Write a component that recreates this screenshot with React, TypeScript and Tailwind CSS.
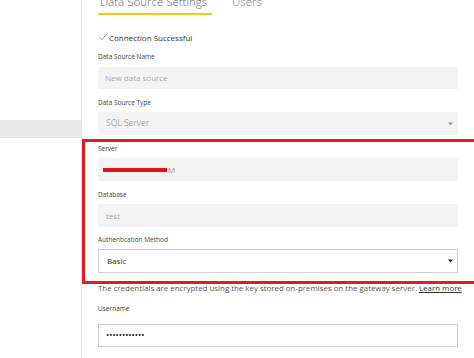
import React from "react";

function Label({ children, className = "" }: { children: React.ReactNode; className?: string }) {
  return (
    <div className={`h-[10px] leading-[10px] text-[6.5px] text-[#444] ${className}`}>{children}</div>
  );
}

function Caret({ color }: { color: string }) {
  return (
    <svg width="5" height="4" viewBox="0 0 5 4" className="shrink-0">
      <path d="M0 0.5 L5 0.5 L2.5 3.5 Z" fill={color} />
    </svg>
  );
}

export default function App() {
  return (
    <div className="w-[474px] h-[358px] overflow-hidden bg-white flex font-['Open_Sans',sans-serif]">
      {/* left nav strip */}
      <aside className="w-[82px] shrink-0 border-r border-[#e6e6e6] pt-[120px]">
        <div className="h-[18px] bg-[#e8e8e8]" />
      </aside>

      <main className="flex-1 min-w-0">
        <div className="pl-[16px]">
          <div className="flex items-start gap-[20px] h-[15px]">
            <div className="w-[114px]">
              <div className="-mt-[8px] h-[20px] leading-[20px] pl-[2px] text-[11.5px] font-light text-[#666] whitespace-nowrap">
                Data Source Settings
              </div>
              <div className="mt-[1px] h-[2px] bg-[#f2c811]" />
            </div>
            <div className="-mt-[8px] h-[20px] leading-[20px] text-[11.5px] font-light text-[#777]">Users</div>
          </div>

          <div className="mt-[17px] h-[12px] flex items-center">
            <svg width="9" height="8" viewBox="0 0 9 8" className="ml-[1px] -mt-[2px]">
              <path d="M0.5 4.2 L2.8 6.8 L8.4 0.6" fill="none" stroke="#5cb85c" strokeWidth="1" />
            </svg>
            <span className="ml-[1px] text-[8px] leading-[12px] text-[#333]">Connection Successful</span>
          </div>

          <Label className="mt-[8px]">Data Source Name</Label>
          <div className="mt-[5px] w-[360px] h-[22px] bg-[#f3f3f3] flex items-center px-[7px] text-[8px] text-[#ababab]">
            New data source
          </div>

          <Label className="mt-[9px]">Data Source Type</Label>
          <div className="mt-[4px] w-[360px] h-[23px] bg-[#f3f3f3] flex items-center justify-between pl-[8px] pr-[5px] text-[8.5px] text-[#ababab]">
            <span>SQL Server</span>
            <Caret color="#a0a0a0" />
          </div>
        </div>

        {/* highlighted block */}
        <div className="mt-[4px] w-[420px] border-[3px] border-[#dd1c26] pl-[13px] pt-[2px] pb-[8px]">
          <Label>Server</Label>
          <div className="mt-[4px] w-[360px] h-[23px] bg-[#f3f3f3] flex items-center pl-[5px] text-[8px] text-[#9a9a9a]">
            <span className="w-[64px] h-[4px] bg-[#e8101a]" />
            <span className="ml-[1px]">M</span>
          </div>

          <Label className="mt-[9px]">Database</Label>
          <div className="mt-[4px] w-[360px] h-[23px] bg-[#f3f3f3] flex items-center px-[8px] text-[8px] text-[#ababab]">
            test
          </div>

          <Label className="mt-[8px]">Authentication Method</Label>
          <div className="mt-[4px] w-[360px] h-[24px] bg-white border border-[#cfcfcf] flex items-center justify-between pl-[8px] pr-[4px] text-[8px] text-[#333]">
            <span>Basic</span>
            <Caret color="#222" />
          </div>
        </div>

        <div className="pl-[16px]">
          <div className="h-[8px] leading-[8px] text-[7.9px] text-[#555] whitespace-nowrap">
            The credentials are encrypted using the key stored on-premises on the gateway server.{" "}
            <span className="underline text-[#333]">Learn more</span>
          </div>

          <Label className="mt-[12px]">Username</Label>
          <div className="mt-[10px] w-[360px] h-[23px] bg-white border border-[#cfcfcf] flex items-center px-[7px] text-[8.5px] text-[#222]">
            ••••••••••••
          </div>
        </div>
      </main>
    </div>
  );
}
